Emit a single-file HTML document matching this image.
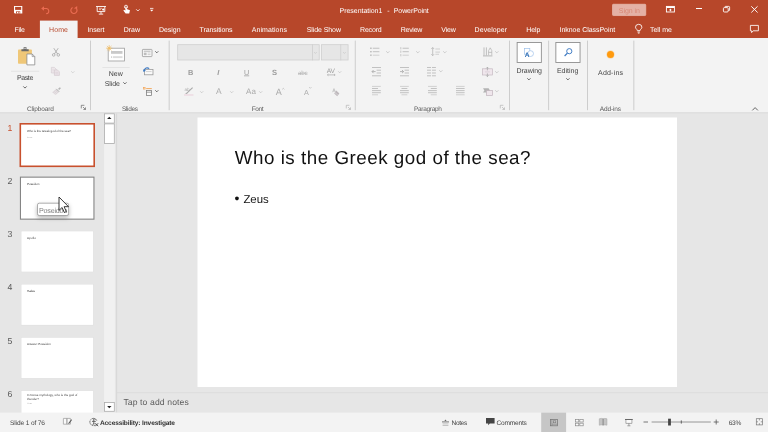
<!DOCTYPE html>
<html lang="en"><head><meta charset="utf-8"><title>Presentation1 - PowerPoint</title>
<style>
html,body{margin:0;padding:0}
body{width:768px;height:432px;overflow:hidden;position:relative;background:#E6E6E6;font-family:"Liberation Sans",sans-serif}
svg{position:absolute;overflow:visible}
svg.txt{left:0;top:0;will-change:transform;text-rendering:geometricPrecision;white-space:pre}
.a{position:absolute}

</style></head>
<body>
<svg width="768" height="432" viewBox="0 0 768 432" style="left:0;top:0">
<rect x="0.00" y="0.00" width="768.00" height="38.00" fill="#B7472A"/>
<rect x="39.90" y="20.60" width="37.70" height="17.60" fill="#F3F3F3"/>
<rect x="612.55" y="4.25" width="33.20" height="11.30" fill="#E4B1A5" stroke="#EBC0B5" stroke-width="0.7" rx="0.8"/>
<rect x="0.00" y="38.00" width="768.00" height="74.40" fill="#F3F3F3"/>
<rect x="0.00" y="112.20" width="768.00" height="1.30" fill="#DEDEDE"/>
<rect x="90.00" y="40.60" width="0.90" height="69.60" fill="#C9C9C9"/>
<rect x="168.70" y="40.60" width="0.90" height="69.60" fill="#C9C9C9"/>
<rect x="354.80" y="40.60" width="0.90" height="69.60" fill="#C9C9C9"/>
<rect x="509.00" y="40.60" width="0.90" height="69.60" fill="#C9C9C9"/>
<rect x="548.20" y="40.60" width="0.90" height="69.60" fill="#C9C9C9"/>
<rect x="587.00" y="40.60" width="0.90" height="69.60" fill="#C9C9C9"/>
<rect x="633.40" y="40.60" width="0.90" height="69.60" fill="#C9C9C9"/>
<rect x="11.00" y="70.80" width="28.30" height="0.80" fill="#E0E0E0"/>
<rect x="102.40" y="67.20" width="27.30" height="0.80" fill="#E0E0E0"/>
<rect x="177.70" y="44.70" width="141.50" height="15.30" fill="#E6E6E6" stroke="#CFCFCF" stroke-width="0.8"/>
<rect x="312.20" y="44.30" width="0.80" height="16.10" fill="#CFCFCF"/>
<rect x="321.50" y="44.70" width="26.60" height="15.30" fill="#E6E6E6" stroke="#CFCFCF" stroke-width="0.8"/>
<rect x="340.40" y="44.30" width="0.80" height="16.10" fill="#CFCFCF"/>
<rect x="517.15" y="42.45" width="24.20" height="20.00" fill="#fff" stroke="#8E8E8E" stroke-width="0.9"/>
<rect x="555.85" y="42.45" width="24.20" height="20.00" fill="#fff" stroke="#8E8E8E" stroke-width="0.9"/>
<rect x="104.10" y="113.40" width="10.80" height="299.20" fill="#F1F1F1"/>
<rect x="116.20" y="113.40" width="0.90" height="299.20" fill="#D6D6D6"/>
<rect x="104.50" y="113.80" width="9.80" height="9.30" fill="#fff" stroke="#ABABAB" stroke-width="0.8"/>
<rect x="104.50" y="123.90" width="9.80" height="19.50" fill="#fff" stroke="#ABABAB" stroke-width="0.8"/>
<rect x="104.50" y="402.50" width="9.80" height="8.80" fill="#fff" stroke="#ABABAB" stroke-width="0.8"/>
<rect x="19.50" y="123.00" width="75.50" height="44.10" fill="#C8512E"/>
<rect x="21.10" y="124.60" width="72.30" height="40.90" fill="#fff"/>
<rect x="19.90" y="176.60" width="74.60" height="43.10" fill="#858585"/>
<rect x="21.00" y="177.70" width="72.40" height="40.90" fill="#fff"/>
<rect x="21.00" y="230.90" width="72.50" height="41.20" fill="#DDDDDD"/>
<rect x="21.40" y="231.30" width="71.70" height="40.40" fill="#fff"/>
<rect x="21.00" y="284.10" width="72.50" height="41.20" fill="#DDDDDD"/>
<rect x="21.40" y="284.50" width="71.70" height="40.40" fill="#fff"/>
<rect x="21.00" y="337.30" width="72.50" height="41.20" fill="#DDDDDD"/>
<rect x="21.40" y="337.70" width="71.70" height="40.40" fill="#fff"/>
<rect x="21.00" y="390.50" width="72.50" height="41.20" fill="#DDDDDD"/>
<rect x="21.40" y="390.90" width="71.70" height="40.40" fill="#fff"/>
<rect x="197.50" y="117.50" width="479.50" height="269.50" fill="#fff"/>
<rect x="117.00" y="392.30" width="651.00" height="0.90" fill="#DADADA"/>
<rect x="0.00" y="412.60" width="768.00" height="19.40" fill="#F3F3F3"/>
<rect x="541.20" y="412.60" width="24.90" height="19.40" fill="#C6C6C6"/>
</svg>
<!-- QAT icons -->
<svg style="left:14px;top:5.9px" width="8.3" height="7.6" viewBox="0 0 8.3 7.6"><path d="M0 0H8.3V7.6H0.9L0 6.7Z" fill="#fff"/><rect x="1.1" y="0.9" width="6.1" height="3" fill="#B7472A"/><rect x="2.1" y="5.3" width="4.1" height="2.3" fill="#B7472A"/><rect x="3" y="5.8" width="1" height="1.4" fill="#fff"/><rect x="4.6" y="5.8" width="1" height="1.4" fill="#fff"/></svg>
<svg style="left:41.3px;top:6px" width="9" height="8" viewBox="0 0 9 8"><path d="M0.2 2.5 L3 0.2 V4.8 Z" fill="#EA6C52"/><path d="M2.6 2.5 H5.6 A2.7 2.7 0 0 1 6.6 7.4 L5.2 7.6" fill="none" stroke="#EA6C52" stroke-width="1.15"/></svg>
<svg style="left:69.7px;top:6px" width="7.8" height="8.2" viewBox="0 0 7.8 8.2"><path d="M2.6 1.6 A3.1 3.1 0 1 0 5.9 2" fill="none" stroke="#EA6C52" stroke-width="1.15"/><path d="M3.8 2.6 H7.2 V0 Z" fill="#EA6C52"/></svg>
<svg style="left:96.1px;top:5.6px" width="10" height="8.8" viewBox="0 0 10 8.8"><path d="M0 0.5H10 M1.2 0.8V5.6H8.8V0.8 M5 5.6V7.8 M2.8 8.1H7.2" fill="none" stroke="#fff" stroke-width="0.9"/><path d="M3 2.3H6 M3 3.6H5" stroke="#F3C9BD" stroke-width="0.8"/><circle cx="7.2" cy="3.6" r="1.1" fill="#fff"/></svg>
<svg style="left:123.4px;top:5.2px" width="7.4" height="8.8" viewBox="0 0 7.4 8.8"><circle cx="3" cy="1.8" r="1.6" fill="none" stroke="#fff" stroke-width="0.8"/><path d="M2.4 1.6 V5.6 L1 4.8 L0.4 5.6 L2.6 8.6 H6.2 L7 5.2 L3.6 4 V1.6 Z" fill="#fff"/></svg>
<svg style="left:135.5px;top:8.6px" width="3.8" height="2.4" viewBox="0 0 3.8 2.4"><path d="M0.2 0.3 L1.9 2 L3.6 0.3" fill="none" stroke="#fff" stroke-width="0.8"/></svg>
<svg style="left:149.8px;top:8.1px" width="3.4" height="3.8" viewBox="0 0 3.4 3.8"><path d="M0 0.4H3.4" stroke="#fff" stroke-width="0.8"/><path d="M0 1.8H3.4L1.7 3.6Z" fill="#fff"/></svg>
<!-- window controls -->
<svg style="left:666.3px;top:6.2px" width="8.8" height="6.4" viewBox="0 0 8.8 6.4"><rect x="0.4" y="0.4" width="8" height="5.6" fill="none" stroke="#fff" stroke-width="0.9"/><rect x="0.4" y="0.4" width="8" height="1.6" fill="#fff"/><path d="M4.4 2.6 L5.8 4.2 H3 Z" fill="#fff"/><rect x="3.9" y="4" width="1" height="1.2" fill="#fff"/></svg>
<div class="a" style="left:695.5px;top:8.4px;width:6.8px;height:0.9px;background:#fff"></div>
<svg style="left:723.2px;top:6px" width="7" height="6.4" viewBox="0 0 7 6.4"><rect x="0.4" y="1.6" width="4.8" height="4.4" rx="1" fill="none" stroke="#fff" stroke-width="0.9"/><path d="M1.8 1.4 V1 Q1.8 0.4 2.6 0.4 H5.8 Q6.6 0.4 6.6 1.2 V4 Q6.6 4.6 5.8 4.6 H5.4" fill="none" stroke="#fff" stroke-width="0.9"/></svg>
<svg style="left:750.7px;top:5.8px" width="6.9" height="6.8" viewBox="0 0 6.9 6.8"><path d="M0.3 0.3 L6.6 6.5 M6.6 0.3 L0.3 6.5" stroke="#fff" stroke-width="0.95"/></svg>
<!-- lightbulb + comments -->
<svg style="left:635px;top:24px" width="7.4" height="9.4" viewBox="0 0 7.4 9.4"><path d="M2.3 6.6 C2.3 5.2 0.5 4.8 0.5 3.2 A3.2 2.9 0 0 1 6.9 3.2 C6.9 4.8 5.1 5.2 5.1 6.6 Z M2.5 8 H4.9 M2.9 9.1 H4.5" fill="none" stroke="#fff" stroke-width="0.85"/></svg>
<svg style="left:749.7px;top:25.4px" width="8.8" height="8" viewBox="0 0 8.8 8"><path d="M0.4 0.4 H8.4 V5.8 H3.2 L1.6 7.6 V5.8 H0.4 Z" fill="none" stroke="#fff" stroke-width="0.85"/></svg>
<!-- Clipboard group -->
<svg style="left:18px;top:46.6px" width="17.2" height="18.4" viewBox="0 0 17.2 18.4"><rect x="0" y="2.4" width="13.9" height="14.3" rx="0.8" fill="#EFC778"/><path d="M3.4 4.2 V2.2 H5.6 V0.6 Q5.6 0 6.2 0 H7.9 Q8.5 0 8.5 0.6 V2.2 H10.7 V4.2 Z" fill="#6A6A6A"/><rect x="6.3" y="0.7" width="1.5" height="1" fill="#F3F3F3"/><path d="M8.9 7 H14.2 L16.8 9.6 V17.9 H8.9 Z" fill="#fff" stroke="#8A8A8A" stroke-width="0.8"/><path d="M14.2 7 V9.6 H16.8" fill="none" stroke="#8A8A8A" stroke-width="0.7"/></svg>
<svg style="left:22.9px;top:85.8px" width="4" height="2.6" viewBox="0 0 4 2.6"><path d="M0.3 0.4 L2 2.1 L3.7 0.4" fill="none" stroke="#444" stroke-width="0.8"/></svg>
<!-- cut -->
<svg style="left:52.4px;top:48px" width="8" height="8.6" viewBox="0 0 8 8.6"><path d="M1.8 0.2 L5.6 6 M6.2 0.2 L2.4 6" stroke="#A3A3A3" stroke-width="0.8" fill="none"/><circle cx="1.7" cy="6.9" r="1.3" fill="none" stroke="#A3A3A3" stroke-width="0.75"/><circle cx="6.3" cy="6.9" r="1.3" fill="none" stroke="#A3A3A3" stroke-width="0.75"/></svg>
<!-- copy -->
<svg style="left:51px;top:67.1px" width="8.8" height="8.8" viewBox="0 0 8.8 8.8"><path d="M0.4 0.4 H3.4 L5.2 2.2 V6 H0.4 Z" fill="#EEE8EB" stroke="#D2C8CE" stroke-width="0.6"/><path d="M3.4 2.9 H6.4 L8.4 4.9 V8.4 H3.4 Z" fill="#EBE3E8" stroke="#CFC4CA" stroke-width="0.6"/><path d="M4.4 5.4H7.2M4.4 6.8H7.2" stroke="#D9CFD5" stroke-width="0.6"/><path d="M1.2 2.4H3M1.2 3.8H3" stroke="#DDD4D9" stroke-width="0.5"/></svg>
<svg style="left:71.1px;top:71px" width="3.6" height="2.2" viewBox="0 0 3.6 2.2"><path d="M0.2 0.3 L1.8 1.9 L3.4 0.3" fill="none" stroke="#C6C6C6" stroke-width="0.7"/></svg>
<!-- format painter -->
<svg style="left:52.4px;top:87px" width="9" height="8" viewBox="0 0 9 8"><path d="M8.4 0.7 L6.6 2.4" stroke="#B4B4B4" stroke-width="1.5"/><path d="M3.8 2.2 L6.9 5.2 L3.5 7.9 L0.2 5.3 Z" fill="#DDD6DA"/><path d="M4.3 1.9 L7.2 4.8" stroke="#ABABAB" stroke-width="1"/><path d="M1.4 4.6 L4 7.2 M2.6 3.6 L5.2 6.2" stroke="#EFEFEF" stroke-width="0.45"/></svg>
<!-- launchers -->
<svg class="ln" style="left:81px;top:105.4px" width="4.8" height="4.8" viewBox="0 0 4.8 4.8"><path d="M0.3 3.4V0.3H3.4" fill="none" stroke="#666" stroke-width="0.7"/><path d="M2 2L4.4 4.4M4.5 2.4V4.5H2.4" fill="none" stroke="#666" stroke-width="0.7"/></svg>
<svg class="ln" style="left:346px;top:105.4px" width="4.8" height="4.8" viewBox="0 0 4.8 4.8"><path d="M0.3 3.4V0.3H3.4" fill="none" stroke="#B5B5B5" stroke-width="0.7"/><path d="M2 2L4.4 4.4M4.5 2.4V4.5H2.4" fill="none" stroke="#B5B5B5" stroke-width="0.7"/></svg>
<svg class="ln" style="left:500.2px;top:105.4px" width="4.8" height="4.8" viewBox="0 0 4.8 4.8"><path d="M0.3 3.4V0.3H3.4" fill="none" stroke="#B5B5B5" stroke-width="0.7"/><path d="M2 2L4.4 4.4M4.5 2.4V4.5H2.4" fill="none" stroke="#B5B5B5" stroke-width="0.7"/></svg>
<!-- collapse ribbon chevron -->
<svg style="left:752px;top:107px" width="6.2" height="3.8" viewBox="0 0 6.2 3.8"><path d="M0.3 3.4 L3.1 0.6 L5.9 3.4" fill="none" stroke="#555" stroke-width="0.9"/></svg>
<!-- Slides group -->
<svg style="left:106.2px;top:45.4px" width="19" height="16.4" viewBox="0 0 19 16.4"><rect x="2.2" y="3.2" width="16.4" height="12.8" fill="#fff" stroke="#9C9C9C" stroke-width="0.8"/><rect x="5" y="6" width="11.5" height="2.8" fill="#C9C9C9"/><rect x="5" y="11.2" width="1" height="1.8" fill="#D5D5D5"/><rect x="6.8" y="11.2" width="9.7" height="1.9" fill="#DCDCDC"/><circle cx="3.2" cy="3.2" r="1.5" fill="#F6D9A0"/><path d="M3.2 0V6.4M0 3.2H6.4M0.9 0.9L5.5 5.5M5.5 0.9L0.9 5.5" stroke="#EFB85E" stroke-width="0.6"/></svg>
<svg style="left:122.7px;top:82.3px" width="3.8" height="2.4" viewBox="0 0 3.8 2.4"><path d="M0.3 0.3 L1.9 1.9 L3.5 0.3" fill="none" stroke="#444" stroke-width="0.8"/></svg>
<!-- layout -->
<svg style="left:142.2px;top:48.6px" width="10.4" height="8" viewBox="0 0 10.4 8"><rect x="0.4" y="0.4" width="9.6" height="7.2" rx="0.6" fill="#FAFAFA" stroke="#9A9A9A" stroke-width="0.8"/><path d="M1.8 2.2H8.6" stroke="#9A9A9A" stroke-width="0.7"/><rect x="1.8" y="3.6" width="2.8" height="2.6" fill="#BDBDBD"/><path d="M5.6 4H8.6M5.6 5.6H8.6" stroke="#BDBDBD" stroke-width="0.7"/></svg>
<svg style="left:155.2px;top:51px" width="3.6" height="2.3" viewBox="0 0 3.6 2.3"><path d="M0.3 0.3 L1.8 1.8 L3.3 0.3" fill="none" stroke="#444" stroke-width="0.8"/></svg>
<!-- reset -->
<svg style="left:142.6px;top:67.4px" width="10.4" height="8.2" viewBox="0 0 10.4 8.2"><rect x="1.4" y="2.6" width="8.6" height="5.2" fill="#FAFAFA" stroke="#9A9A9A" stroke-width="0.8"/><path d="M3 4.6H8.6" stroke="#C8C8C8" stroke-width="0.8"/><path d="M1.3 3.6 C1.5 1.2 4.2 0 6.2 1.6" fill="none" stroke="#3B78C3" stroke-width="1.1"/><path d="M0 2.2 L0.5 5 L3 3.8 Z" fill="#3B78C3"/></svg>
<!-- section -->
<svg style="left:143.1px;top:87.2px" width="9" height="8.8" viewBox="0 0 9 8.8"><rect x="0.3" y="0.3" width="1.8" height="1.8" fill="#FCE4C4" stroke="#F0A050" stroke-width="0.6"/><path d="M3.2 1.6H8.8" stroke="#F0A050" stroke-width="0.9"/><rect x="3.4" y="3.4" width="5.2" height="5" fill="#FAFAFA" stroke="#7A7A7A" stroke-width="0.75"/><path d="M3.4 5.2H8.6" stroke="#7A7A7A" stroke-width="0.7"/></svg>
<svg style="left:155.2px;top:90.2px" width="3.6" height="2.3" viewBox="0 0 3.6 2.3"><path d="M0.3 0.3 L1.8 1.8 L3.3 0.3" fill="none" stroke="#444" stroke-width="0.8"/></svg>
<!-- Font group -->
<svg style="left:314.2px;top:51.6px" width="2.8" height="1.8" viewBox="0 0 2.8 1.8"><path d="M0.2 0.2 L1.4 1.4 L2.6 0.2" fill="none" stroke="#BDBDBD" stroke-width="0.6"/></svg>
<svg style="left:342.9px;top:51.6px" width="2.8" height="1.8" viewBox="0 0 2.8 1.8"><path d="M0.2 0.2 L1.4 1.4 L2.6 0.2" fill="none" stroke="#BDBDBD" stroke-width="0.6"/></svg>
<!-- highlighter -->
<svg style="left:184.4px;top:87.2px" width="9.6" height="8.4" viewBox="0 0 9.6 8.4"><path d="M8.6 0.6 L2.4 6.6" stroke="#A8A8A8" stroke-width="1.1"/><path d="M1.2 7 L3.2 6.8 L2.2 5.8 Z" fill="#A8A8A8"/><path d="M0 8H9.4" stroke="#E6BFD0" stroke-width="0.7"/></svg>
<svg class="cv" style="left:200px;top:90.7px" width="3.4" height="2.2" viewBox="0 0 3.4 2.2"><path d="M0.2 0.3 L1.7 1.8 L3.2 0.3" fill="none" stroke="#BDBDBD" stroke-width="0.7"/></svg>
<svg class="cv" style="left:230.1px;top:90.7px" width="3.4" height="2.2" viewBox="0 0 3.4 2.2"><path d="M0.2 0.3 L1.7 1.8 L3.2 0.3" fill="none" stroke="#BDBDBD" stroke-width="0.7"/></svg>
<svg class="cv" style="left:258.6px;top:90.7px" width="3.4" height="2.2" viewBox="0 0 3.4 2.2"><path d="M0.2 0.3 L1.7 1.8 L3.2 0.3" fill="none" stroke="#BDBDBD" stroke-width="0.7"/></svg>
<svg class="cv" style="left:338.4px;top:70.6px" width="3.4" height="2.2" viewBox="0 0 3.4 2.2"><path d="M0.2 0.3 L1.7 1.8 L3.2 0.3" fill="none" stroke="#BDBDBD" stroke-width="0.7"/></svg>
<!-- AV arrow -->
<svg style="left:326.5px;top:74.2px" width="8.6" height="1.8" viewBox="0 0 8.6 1.8"><path d="M0.6 0.9H8M1.4 0.1L0.4 0.9L1.4 1.7M7.2 0.1L8.2 0.9L7.2 1.7" fill="none" stroke="#9C9C9C" stroke-width="0.6"/></svg>
<!-- grow / shrink carets -->
<svg style="left:281.6px;top:87.6px" width="2.6" height="1.6" viewBox="0 0 2.6 1.6"><path d="M0.2 1.4 L1.3 0.3 L2.4 1.4" fill="none" stroke="#ABABAB" stroke-width="0.6"/></svg>
<svg style="left:309.4px;top:87.4px" width="2.6" height="1.6" viewBox="0 0 2.6 1.6"><path d="M0.2 0.2 L1.3 1.3 L2.4 0.2" fill="none" stroke="#ABABAB" stroke-width="0.6"/></svg>
<!-- clear formatting -->
<svg style="left:331.8px;top:87.6px" width="7.6" height="8.6" viewBox="0 0 7.6 8.6"><path d="M0.6 4.2 L2 0.6 L3.4 4.2 M1.1 3H2.9" fill="none" stroke="#B0B0B0" stroke-width="0.6"/><path d="M4.2 2.6 L7.4 5.4 L5.2 8.2 L2.2 5.4 Z" fill="#BEB8BC"/><path d="M3 4.6 L6 7.2" stroke="#ECECEC" stroke-width="0.5"/></svg>
<!-- Paragraph group -->
<svg style="left:370.0px;top:47.0px" width="9.6" height="9.4" viewBox="0 0 9.6 9.4"><rect x="0.2" y="0.55" width="1.4" height="1.4" fill="#B4B4B4"/><path d="M2.8 1.25H9.4" stroke="#B4B4B4" stroke-width="0.8"/><rect x="0.2" y="4.00" width="1.4" height="1.4" fill="#B4B4B4"/><path d="M2.8 4.70H9.4" stroke="#B4B4B4" stroke-width="0.8"/><rect x="0.2" y="7.50" width="1.4" height="1.4" fill="#B4B4B4"/><path d="M2.8 8.20H9.4" stroke="#C6C6C6" stroke-width="0.8"/></svg>
<svg style="left:385.5px;top:51.0px" width="3.6" height="2.2" viewBox="0 0 3.6 2.2"><path d="M0.2 0.3 L1.8 1.9 L3.4 0.3" fill="none" stroke="#B8B8B8" stroke-width="0.7"/></svg>
<svg style="left:400.4px;top:47.0px" width="9.0" height="9.4" viewBox="0 0 9.0 9.4"><path d="M0.8 0.15V2.35" stroke="#B4B4B4" stroke-width="0.7"/><path d="M2.6 1.25H8.8" stroke="#B4B4B4" stroke-width="0.8"/><path d="M0.8 3.60V5.80" stroke="#B4B4B4" stroke-width="0.7"/><path d="M2.6 4.70H8.8" stroke="#B4B4B4" stroke-width="0.8"/><path d="M0.8 7.10V9.30" stroke="#B4B4B4" stroke-width="0.7"/><path d="M2.6 8.20H8.8" stroke="#C6C6C6" stroke-width="0.8"/></svg>
<svg style="left:415.6px;top:51.0px" width="3.6" height="2.2" viewBox="0 0 3.6 2.2"><path d="M0.2 0.3 L1.8 1.9 L3.4 0.3" fill="none" stroke="#B8B8B8" stroke-width="0.7"/></svg>
<svg style="left:430.8px;top:47.2px" width="9.2" height="9.2" viewBox="0 0 9.2 9.2"><path d="M1.7 0.6V8.6M0.3 2L1.7 0.5L3.1 2M0.3 7.2L1.7 8.7L3.1 7.2" fill="none" stroke="#B4B4B4" stroke-width="0.75"/><path d="M4.4 2H9M4.4 5.1H9M4.4 7.3H8" stroke="#C6C6C6" stroke-width="0.8"/></svg>
<svg style="left:443.3px;top:51.0px" width="3.6" height="2.2" viewBox="0 0 3.6 2.2"><path d="M0.2 0.3 L1.8 1.9 L3.4 0.3" fill="none" stroke="#B8B8B8" stroke-width="0.7"/></svg>
<svg style="left:372.0px;top:66.8px" width="9.2" height="9.4" viewBox="0 0 9.2 9.4"><path d="M0.0 0.50H9.0" stroke="#B4B4B4" stroke-width="0.8"/><path d="M4.6 3.20H9.0" stroke="#B4B4B4" stroke-width="0.8"/><path d="M4.6 6.00H9.0" stroke="#B4B4B4" stroke-width="0.8"/><path d="M0.0 8.80H9.0" stroke="#B4B4B4" stroke-width="0.8"/><path d="M0 4.6H3.6M1.6 3L0 4.6L1.6 6.2" fill="none" stroke="#A6A6A6" stroke-width="0.8"/></svg>
<svg style="left:399.8px;top:66.8px" width="9.2" height="9.4" viewBox="0 0 9.2 9.4"><path d="M0.0 0.50H9.0" stroke="#B4B4B4" stroke-width="0.8"/><path d="M4.6 3.20H9.0" stroke="#B4B4B4" stroke-width="0.8"/><path d="M4.6 6.00H9.0" stroke="#B4B4B4" stroke-width="0.8"/><path d="M0.0 8.80H9.0" stroke="#B4B4B4" stroke-width="0.8"/><path d="M0 4.6H3.6M2 3L3.6 4.6L2 6.2" fill="none" stroke="#A6A6A6" stroke-width="0.8"/></svg>
<svg style="left:427.0px;top:66.8px" width="9.0" height="9.4" viewBox="0 0 9.0 9.4"><path d="M0.0 0.50H4.0" stroke="#B4B4B4" stroke-width="0.8"/><path d="M0.0 3.20H4.0" stroke="#B4B4B4" stroke-width="0.8"/><path d="M0.0 6.00H4.0" stroke="#B4B4B4" stroke-width="0.8"/><path d="M0.0 8.80H4.0" stroke="#B4B4B4" stroke-width="0.8"/><path d="M5.0 0.50H8.9" stroke="#B4B4B4" stroke-width="0.8"/><path d="M5.0 3.20H8.9" stroke="#B4B4B4" stroke-width="0.8"/><path d="M5.0 6.00H8.9" stroke="#B4B4B4" stroke-width="0.8"/><path d="M5.0 8.80H8.9" stroke="#B4B4B4" stroke-width="0.8"/></svg>
<svg style="left:439.1px;top:70.4px" width="3.6" height="2.2" viewBox="0 0 3.6 2.2"><path d="M0.2 0.3 L1.8 1.9 L3.4 0.3" fill="none" stroke="#B8B8B8" stroke-width="0.7"/></svg>
<svg style="left:372.0px;top:86.4px" width="9.0" height="9.4" viewBox="0 0 9.0 9.4"><path d="M0.0 0.40H8.8" stroke="#C6C6C6" stroke-width="0.8"/><path d="M0.0 2.50H6.0" stroke="#B4B4B4" stroke-width="0.8"/><path d="M0.0 4.60H8.8" stroke="#B4B4B4" stroke-width="0.8"/><path d="M0.0 6.70H8.8" stroke="#B4B4B4" stroke-width="0.8"/><path d="M0.0 8.80H6.0" stroke="#C6C6C6" stroke-width="0.8"/></svg>
<svg style="left:400.2px;top:86.4px" width="9.0" height="9.4" viewBox="0 0 9.0 9.4"><path d="M0.0 0.40H8.8" stroke="#C6C6C6" stroke-width="0.8"/><path d="M1.5 2.50H7.3" stroke="#B4B4B4" stroke-width="0.8"/><path d="M0.0 4.60H8.8" stroke="#B4B4B4" stroke-width="0.8"/><path d="M0.0 6.70H8.8" stroke="#B4B4B4" stroke-width="0.8"/><path d="M1.5 8.80H7.3" stroke="#C6C6C6" stroke-width="0.8"/></svg>
<svg style="left:428.3px;top:86.4px" width="9.0" height="9.4" viewBox="0 0 9.0 9.4"><path d="M0.0 0.40H8.8" stroke="#C6C6C6" stroke-width="0.8"/><path d="M2.8 2.50H8.8" stroke="#B4B4B4" stroke-width="0.8"/><path d="M0.0 4.60H8.8" stroke="#B4B4B4" stroke-width="0.8"/><path d="M0.0 6.70H8.8" stroke="#B4B4B4" stroke-width="0.8"/><path d="M2.8 8.80H8.8" stroke="#C6C6C6" stroke-width="0.8"/></svg>
<svg style="left:456.2px;top:86.4px" width="9.0" height="9.4" viewBox="0 0 9.0 9.4"><path d="M0.0 0.40H8.6" stroke="#C6C6C6" stroke-width="0.8"/><path d="M0.0 2.50H8.6" stroke="#B4B4B4" stroke-width="0.8"/><path d="M0.0 4.60H8.6" stroke="#B4B4B4" stroke-width="0.8"/><path d="M0.0 6.70H8.6" stroke="#B4B4B4" stroke-width="0.8"/><path d="M0.0 8.80H8.6" stroke="#C6C6C6" stroke-width="0.8"/></svg>
<!-- text direction -->
<svg style="left:483px;top:47.4px" width="9.6" height="9.4" viewBox="0 0 9.6 9.4"><path d="M1 0.4V8.4M3.4 0.4V8.4" stroke="#B0B0B0" stroke-width="0.8"/><path d="M5.6 8.2V3.6L7.2 0.8L8.8 3.6V8.2M5.6 5.4H8.8" fill="none" stroke="#B0B0B0" stroke-width="0.7"/><path d="M0 8.9H9.4" stroke="#A8A8A8" stroke-width="0.8"/></svg>
<svg style="left:495.1px;top:51px" width="3.6" height="2.2" viewBox="0 0 3.6 2.2"><path d="M0.2 0.3 L1.8 1.9 L3.4 0.3" fill="none" stroke="#B8B8B8" stroke-width="0.7"/></svg>
<!-- align text -->
<svg style="left:482.2px;top:67px" width="10.8" height="9.8" viewBox="0 0 10.8 9.8"><rect x="0.4" y="1.8" width="10" height="6.2" fill="#EFE6EC" stroke="#C6BAC2" stroke-width="0.7"/><path d="M3 4.9H7.8" stroke="#D6CAD2" stroke-width="0.7"/><path d="M5.4 0.2V3.4M5.4 6.4V9.6M4.2 1.4L5.4 0.2L6.6 1.4M4.2 8.4L5.4 9.6L6.6 8.4" fill="none" stroke="#A6A6A6" stroke-width="0.75"/></svg>
<svg style="left:495.1px;top:70.8px" width="3.6" height="2.2" viewBox="0 0 3.6 2.2"><path d="M0.2 0.3 L1.8 1.9 L3.4 0.3" fill="none" stroke="#B8B8B8" stroke-width="0.7"/></svg>
<!-- smartart -->
<svg style="left:483px;top:87.8px" width="10" height="7.8" viewBox="0 0 10 7.8"><path d="M0 0.2H5.6L7 2.4L5.6 4.6H0L1.4 2.4Z" fill="#B4B4B4"/><rect x="3.4" y="2.6" width="6.2" height="4.8" fill="#EFE6EC" stroke="#C0B4BC" stroke-width="0.7"/></svg>
<svg style="left:495.1px;top:90.4px" width="3.6" height="2.2" viewBox="0 0 3.6 2.2"><path d="M0.2 0.3 L1.8 1.9 L3.4 0.3" fill="none" stroke="#B8B8B8" stroke-width="0.7"/></svg>
<!-- drawing icon -->
<svg style="left:524px;top:48px" width="10" height="9.4" viewBox="0 0 10 9.4"><rect x="0.4" y="0.4" width="5.4" height="5.8" fill="#fff" stroke="#9DC0EA" stroke-width="0.7"/><circle cx="6.6" cy="5.6" r="2.9" fill="#fff" stroke="#9DC0EA" stroke-width="0.7"/></svg>
<svg style="left:527.1px;top:77.8px" width="3.8" height="2.3" viewBox="0 0 3.8 2.3"><path d="M0.3 0.3 L1.9 1.9 L3.5 0.3" fill="none" stroke="#444" stroke-width="0.8"/></svg>
<!-- editing icon -->
<svg style="left:563.8px;top:48.2px" width="8.6" height="8.6" viewBox="0 0 8.6 8.6"><circle cx="5.3" cy="3.2" r="2.6" fill="none" stroke="#3C79C2" stroke-width="0.95"/><path d="M3.4 5.2 L0.6 8" stroke="#3C79C2" stroke-width="1.2"/></svg>
<svg style="left:565.8px;top:77.8px" width="3.8" height="2.3" viewBox="0 0 3.8 2.3"><path d="M0.3 0.3 L1.9 1.9 L3.5 0.3" fill="none" stroke="#444" stroke-width="0.8"/></svg>
<!-- add-ins dot -->
<svg style="left:605.5px;top:50px" width="9" height="9" viewBox="0 0 9 9"><circle cx="4.5" cy="4.5" r="4.2" fill="#FFB347" opacity="0.35"/><circle cx="4.5" cy="4.5" r="3.5" fill="#FF9A0E"/></svg>
<!-- scrollbar arrows -->
<svg style="left:104.1px;top:113.4px" width="10.6" height="10.2" viewBox="0 0 10.6 10.2"><path d="M3.1 6.1 L5.3 3.8 L7.5 6.1 Z" fill="#222"/></svg>
<svg style="left:104.1px;top:402.1px" width="10.6" height="9.8" viewBox="0 0 10.6 9.8"><path d="M3.1 3.9 L7.5 3.9 L5.3 6.2 Z" fill="#222"/></svg>
<!-- status bar icons -->
<svg style="left:63.1px;top:418.2px" width="9" height="7" viewBox="0 0 9 7"><path d="M0.4 0.4H3.9V6.2H0.4ZM3.9 0.4H7.4V6.2H3.9Z" fill="#FAFAFA" stroke="#9A9A9A" stroke-width="0.7"/><path d="M8.4 1.2L5.6 4.8L5.2 6L6.4 5.5L9 2Z" fill="#555"/></svg>
<svg style="left:90px;top:418.2px" width="8.6" height="8.6" viewBox="0 0 8.6 8.6"><path d="M3.6 0.4A3.6 3.6 0 1 0 5.6 6.9" fill="none" stroke="#333" stroke-width="0.7" stroke-dasharray="1.6 0.7"/><path d="M3.6 0.4A3.6 3.6 0 0 1 6.8 2.6" fill="none" stroke="#333" stroke-width="0.7"/><circle cx="3.8" cy="2" r="0.7" fill="#333"/><path d="M2 3.4H5.8M3.8 3.4V5.2M3.8 5.2L2.8 7M3.8 5.2L4.6 6.2" fill="none" stroke="#333" stroke-width="0.7"/><path d="M5.4 5.2L8.2 8.2M8.2 5.2L5.4 8.2" stroke="#333" stroke-width="0.8"/></svg>
<svg style="left:441.5px;top:418.6px" width="7" height="7" viewBox="0 0 7 7"><path d="M2.4 1.9L3.5 0.4L4.6 1.9Z" fill="#666"/><path d="M0 2.9H7" stroke="#555" stroke-width="0.8"/><path d="M0.6 4.9H6.4M0.6 6.5H6.4" stroke="#ADADAD" stroke-width="0.7"/></svg>
<svg style="left:486.1px;top:418.2px" width="8.6" height="7.4" viewBox="0 0 8.6 7.4"><path d="M0 0H8.6V5.6H3.8L2.2 7.3V5.6H0Z" fill="#444"/></svg>
<svg style="left:550.2px;top:418.5px" width="7.8" height="7.2" viewBox="0 0 7.8 7.2"><rect x="0.4" y="0.4" width="7" height="6.4" fill="none" stroke="#777" stroke-width="0.75"/><path d="M1.9 0.4V6.8M1.9 5.2H7.4" stroke="#777" stroke-width="0.6"/><rect x="3.6" y="1.8" width="2.2" height="2" fill="none" stroke="#777" stroke-width="0.6"/></svg>
<svg style="left:574.5px;top:418.5px" width="8.6" height="7.2" viewBox="0 0 8.6 7.2"><rect x="0.4" y="0.4" width="3.4" height="2.6" fill="#FAFAFA" stroke="#8A8A8A" stroke-width="0.7"/><rect x="4.8" y="0.4" width="3.4" height="2.6" fill="#FAFAFA" stroke="#8A8A8A" stroke-width="0.7"/><rect x="0.4" y="4.2" width="3.4" height="2.6" fill="#FAFAFA" stroke="#8A8A8A" stroke-width="0.7"/><rect x="4.8" y="4.2" width="3.4" height="2.6" fill="#FAFAFA" stroke="#8A8A8A" stroke-width="0.7"/></svg>
<svg style="left:599.2px;top:418.2px" width="8.2" height="7.5" viewBox="0 0 8.2 7.5"><path d="M0.3 0.8Q2.4 0 4.1 0.8Q5.8 0 7.9 0.8V7.2Q5.8 6.4 4.1 7.2Q2.4 6.4 0.3 7.2Z" fill="#C4C4C4" stroke="#A8A8A8" stroke-width="0.6"/><path d="M4.1 0.8V7.2" stroke="#777" stroke-width="0.8"/></svg>
<svg style="left:624.5px;top:418.5px" width="7.8" height="7.2" viewBox="0 0 7.8 7.2"><path d="M0 0.5H7.8" stroke="#666" stroke-width="1"/><path d="M0.9 1V4.4H6.9V1" fill="#FAFAFA" stroke="#8A8A8A" stroke-width="0.7"/><path d="M3.9 4.4V6.4M2.4 6.8H5.4" stroke="#777" stroke-width="0.7"/></svg>
<!-- zoom slider -->
<svg style="left:643px;top:417px" width="125" height="11" viewBox="0 0 125 11"><path d="M0.5 5H5" stroke="#555" stroke-width="0.8"/><path d="M8.6 5H67.8" stroke="#8C8C8C" stroke-width="0.9"/><path d="M38.3 3.4V6.6" stroke="#555" stroke-width="0.9"/><rect x="25.1" y="1.7" width="2.8" height="6.8" fill="#444"/><path d="M70.7 5H75.7M73.2 2.5V7.5" stroke="#555" stroke-width="0.8"/><rect x="113.3" y="1.7" width="6.2" height="6.2" fill="none" stroke="#777" stroke-width="0.7"/><path d="M116.4 1.7V3.4M116.4 7.9V6.2M113.3 4.8H115M119.5 4.8H117.8" stroke="#777" stroke-width="0.7"/></svg>
<!-- tooltip + cursor -->
<svg style="left:0;top:0;filter:drop-shadow(0 2.2px 2.2px rgba(0,0,0,0.3))" width="768" height="432" viewBox="0 0 768 432"><rect x="37.5" y="203.2" width="31.1" height="12.3" rx="1.7" fill="#fff" stroke="#8E8E8E" stroke-width="0.7"/></svg>
<svg class="cur" style="left:59.2px;top:197.1px;z-index:5" width="10" height="16" viewBox="0 0 10 16"><path d="M0 0V13.4L3.1 10.5L5.3 15.5L7.3 14.6L5.1 9.7H9.5Z" fill="#fff" stroke="#222" stroke-width="0.9" stroke-linejoin="miter"/></svg>

<!-- text -->
<svg class="txt" width="768" height="432" viewBox="0 0 768 432" font-family="Liberation Sans, sans-serif" xml:space="preserve">
<text x="339.60" y="12.90" font-size="7.0" fill="#ffffff" letter-spacing="-0.042" >Presentation1</text>
<text x="387.30" y="12.90" font-size="7.0" fill="#ffffff" >-</text>
<text x="393.75" y="12.90" font-size="7.0" fill="#ffffff" letter-spacing="-0.089" >PowerPoint</text>
<text x="618.80" y="12.80" font-size="7.0" fill="#D88875" letter-spacing="-0.034" >Sign in</text>
<text x="14.50" y="31.70" font-size="7.0" fill="#ffffff" letter-spacing="-0.260" >File</text>
<text x="87.50" y="31.70" font-size="7.0" fill="#ffffff" letter-spacing="-0.103" >Insert</text>
<text x="123.75" y="31.70" font-size="7.0" fill="#ffffff" letter-spacing="-0.031" >Draw</text>
<text x="158.90" y="31.70" font-size="7.0" fill="#ffffff" letter-spacing="-0.019" >Design</text>
<text x="199.60" y="31.70" font-size="7.0" fill="#ffffff" letter-spacing="-0.108" >Transitions</text>
<text x="251.70" y="31.70" font-size="7.0" fill="#ffffff" letter-spacing="0.084" >Animations</text>
<text x="306.70" y="31.70" font-size="7.0" fill="#ffffff" letter-spacing="-0.081" >Slide Show</text>
<text x="360.00" y="31.70" font-size="7.0" fill="#ffffff" letter-spacing="-0.176" >Record</text>
<text x="400.80" y="31.70" font-size="7.0" fill="#ffffff" letter-spacing="-0.291" >Review</text>
<text x="441.25" y="31.70" font-size="7.0" fill="#ffffff" letter-spacing="-0.166" >View</text>
<text x="474.60" y="31.70" font-size="7.0" fill="#ffffff" letter-spacing="0.060" >Developer</text>
<text x="526.25" y="31.70" font-size="7.0" fill="#ffffff" letter-spacing="-0.085" >Help</text>
<text x="559.60" y="31.70" font-size="7.0" fill="#ffffff" letter-spacing="-0.051" >Inknoe ClassPoint</text>
<text x="650.00" y="31.70" font-size="7.0" fill="#ffffff" letter-spacing="-0.031" >Tell me</text>
<text x="49.00" y="31.70" font-size="7.0" fill="#B7472A" letter-spacing="0.104" >Home</text>
<text x="17.00" y="80.40" font-size="7.0" fill="#444444" letter-spacing="-0.402" >Paste</text>
<text x="26.90" y="110.65" font-size="6.5" fill="#5a5a5a" letter-spacing="-0.091" >Clipboard</text>
<text x="108.70" y="76.40" font-size="7.0" fill="#444444" letter-spacing="0.042" >New</text>
<text x="104.70" y="86.00" font-size="7.0" fill="#444444" letter-spacing="-0.095" >Slide</text>
<text x="121.90" y="110.65" font-size="6.5" fill="#5a5a5a" letter-spacing="-0.324" >Slides</text>
<text x="251.70" y="110.65" font-size="6.5" fill="#5a5a5a" letter-spacing="-0.339" >Font</text>
<text x="413.90" y="110.65" font-size="6.5" fill="#5a5a5a" letter-spacing="-0.282" >Paragraph</text>
<text x="516.50" y="72.50" font-size="7.0" fill="#444444" letter-spacing="-0.031" >Drawing</text>
<text x="556.90" y="72.50" font-size="7.0" fill="#444444" letter-spacing="-0.001" >Editing</text>
<text x="598.00" y="74.90" font-size="7.0" fill="#444444" letter-spacing="0.211" >Add-ins</text>
<text x="599.80" y="110.65" font-size="6.5" fill="#5a5a5a" letter-spacing="-0.141" >Add-ins</text>
<text x="10.00" y="424.50" font-size="6.6" fill="#444444" letter-spacing="-0.139" >Slide 1 of 76</text>
<text x="100.00" y="424.50" font-size="6.6" fill="#333" letter-spacing="-0.152" font-weight="bold">Accessibility: Investigate</text>
<text x="451.50" y="424.50" font-size="6.6" fill="#444444" letter-spacing="-0.384" >Notes</text>
<text x="496.50" y="424.50" font-size="6.6" fill="#444444" letter-spacing="-0.227" >Comments</text>
<text x="728.80" y="424.50" font-size="6.6" fill="#444444" letter-spacing="-0.352" >63%</text>
<text x="123.40" y="404.80" font-size="8.6" fill="#5c5c5c" letter-spacing="0.120" >Tap to add notes</text>
<text x="234.80" y="163.50" font-size="18.8" fill="#111" letter-spacing="0.513" >Who is the Greek god of the sea?</text>
<text x="234.50" y="203.40" font-size="14" fill="#111" >•</text>
<text x="243.40" y="202.70" font-size="11.4" fill="#111" letter-spacing="0.024" >Zeus</text>
<text x="7.40" y="130.70" font-size="8.7" fill="#C8512E" >1</text>
<text x="7.40" y="183.95" font-size="8.7" fill="#5a5a5a" >2</text>
<text x="7.40" y="237.20" font-size="8.7" fill="#5a5a5a" >3</text>
<text x="7.40" y="290.45" font-size="8.7" fill="#5a5a5a" >4</text>
<text x="7.40" y="343.70" font-size="8.7" fill="#5a5a5a" >5</text>
<text x="7.40" y="396.95" font-size="8.7" fill="#5a5a5a" >6</text>
<text x="188.00" y="74.70" font-size="7.4" fill="#9C9C9C" font-weight="bold">B</text>
<text x="217.20" y="74.70" font-size="7.4" fill="#9C9C9C" font-weight="bold" font-style="italic">I</text>
<text x="244.00" y="74.50" font-size="7.2" fill="#9C9C9C" text-decoration="underline">U</text>
<text x="272.00" y="74.90" font-size="7.6" fill="#9C9C9C" font-weight="bold">S</text>
<text x="298.00" y="74.90" font-size="6.2" fill="#B4B4B4" letter-spacing="-0.192" text-decoration="line-through">abc</text>
<text x="326.70" y="73.10" font-size="6.6" fill="#9C9C9C" letter-spacing="-0.113" >AV</text>
<text x="216.10" y="94.20" font-size="8.4" fill="#ABABAB" >A</text>
<text x="246.10" y="94.20" font-size="8.0" fill="#ABABAB" letter-spacing="0.103" >Aa</text>
<text x="275.70" y="95.40" font-size="9.0" fill="#ABABAB" >A</text>
<text x="304.10" y="95.40" font-size="7.2" fill="#ABABAB" >A</text>
<text x="184.40" y="91.40" font-size="4.6" fill="#ABABAB" >ab</text>
<text x="524.70" y="57.10" font-size="6.6" fill="#2E6DB4" font-weight="bold">A</text>
<text x="26.90" y="132.00" font-size="3.0" fill="#3a3a3a" letter-spacing="-0.019" >Who is the Greek god of the sea?</text>
<text x="26.90" y="137.90" font-size="1.9" fill="#8a8a8a" letter-spacing="0.327" >Zeus</text>
<text x="27.00" y="185.30" font-size="3.0" fill="#3a3a3a" letter-spacing="-0.017" >Poseidon</text>
<text x="27.00" y="238.50" font-size="3.0" fill="#3a3a3a" letter-spacing="0.111" >Apollo</text>
<text x="26.90" y="291.70" font-size="3.0" fill="#3a3a3a" letter-spacing="-0.143" >Hades</text>
<text x="27.00" y="345.00" font-size="3.0" fill="#3a3a3a" letter-spacing="-0.039" >Answer: Poseidon</text>
<text x="27.00" y="395.80" font-size="3.0" fill="#3a3a3a" letter-spacing="0.012" >In Norse mythology, who is the god of</text>
<text x="27.00" y="399.90" font-size="3.0" fill="#3a3a3a" letter-spacing="0.008" >thunder?</text>
<text x="27.00" y="403.80" font-size="1.9" fill="#8a8a8a" letter-spacing="0.370" >Thor</text>
<text x="38.90" y="212.60" font-size="7.2" fill="#808080" letter-spacing="-0.212" >Poseidon</text>
</svg>
</body></html>
